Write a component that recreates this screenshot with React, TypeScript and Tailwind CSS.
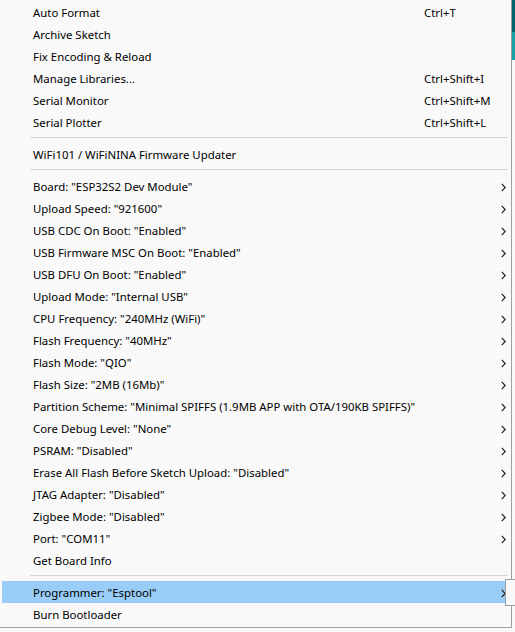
import type { ReactNode } from "react";

type Item =
  | { kind: "item"; label: string; shortcut?: string; sub?: boolean; active?: boolean }
  | { kind: "sep" };

const ITEMS: Item[] = [
  { kind: "item", label: "Auto Format", shortcut: "Ctrl+T" },
  { kind: "item", label: "Archive Sketch" },
  { kind: "item", label: "Fix Encoding & Reload" },
  { kind: "item", label: "Manage Libraries...", shortcut: "Ctrl+Shift+I" },
  { kind: "item", label: "Serial Monitor", shortcut: "Ctrl+Shift+M" },
  { kind: "item", label: "Serial Plotter", shortcut: "Ctrl+Shift+L" },
  { kind: "sep" },
  { kind: "item", label: "WiFi101 / WiFiNINA Firmware Updater" },
  { kind: "sep" },
  { kind: "item", label: 'Board: "ESP32S2 Dev Module"', sub: true },
  { kind: "item", label: 'Upload Speed: "921600"', sub: true },
  { kind: "item", label: 'USB CDC On Boot: "Enabled"', sub: true },
  { kind: "item", label: 'USB Firmware MSC On Boot: "Enabled"', sub: true },
  { kind: "item", label: 'USB DFU On Boot: "Enabled"', sub: true },
  { kind: "item", label: 'Upload Mode: "Internal USB"', sub: true },
  { kind: "item", label: 'CPU Frequency: "240MHz (WiFi)"', sub: true },
  { kind: "item", label: 'Flash Frequency: "40MHz"', sub: true },
  { kind: "item", label: 'Flash Mode: "QIO"', sub: true },
  { kind: "item", label: 'Flash Size: "2MB (16Mb)"', sub: true },
  { kind: "item", label: 'Partition Scheme: "Minimal SPIFFS (1.9MB APP with OTA/190KB SPIFFS)"', sub: true },
  { kind: "item", label: 'Core Debug Level: "None"', sub: true },
  { kind: "item", label: 'PSRAM: "Disabled"', sub: true },
  { kind: "item", label: 'Erase All Flash Before Sketch Upload: "Disabled"', sub: true },
  { kind: "item", label: 'JTAG Adapter: "Disabled"', sub: true },
  { kind: "item", label: 'Zigbee Mode: "Disabled"', sub: true },
  { kind: "item", label: 'Port: "COM11"', sub: true },
  { kind: "item", label: "Get Board Info" },
  { kind: "sep" },
  { kind: "item", label: 'Programmer: "Esptool"', sub: true, active: true },
  { kind: "item", label: "Burn Bootloader" },
];

function Chevron() {
  return (
    <svg width="5" height="9" viewBox="0 0 5 9" className="shrink-0">
      <path d="M0.8 0.8 L4.2 4.5 L0.8 8.2" fill="none" stroke="#222" strokeWidth="1.2" />
    </svg>
  );
}

function Row({ children, active }: { children: ReactNode; active?: boolean }) {
  return (
    <div
      className={`ml-[2px] mr-[2px] h-[22px] flex items-center pl-[31px] pr-[3px] pt-[2px] ${
        active ? "bg-[#99ccf7]" : ""
      }`}
    >
      {children}
    </div>
  );
}

export default function App() {
  return (
    <div
      className="w-[515px] h-[632px] bg-[#f9f9f9] relative overflow-hidden flex text-[11.4px] text-black"
      style={{ fontFamily: '"Noto Sans", "Liberation Sans", sans-serif' }}
    >
      {/* Menu */}
      <div className="w-[512px] h-[628px] border-r border-b border-[#a0a0a0] pt-[1px] flex flex-col">
        {ITEMS.map((item, i) =>
          item.kind === "sep" ? (
            <div key={i} className="h-[10px] pt-[4px] pl-[30px] pr-[3px]">
              <div className="h-px bg-[#d7d7d7]" />
            </div>
          ) : (
            <Row key={i} active={item.active}>
              <span className="flex-1 leading-none whitespace-nowrap">{item.label}</span>
              {item.shortcut && (
                <span className="w-[82px] leading-none whitespace-nowrap">{item.shortcut}</span>
              )}
              {item.sub && <Chevron />}
            </Row>
          )
        )}
      </div>

      {/* IDE window behind */}
      <div className="w-[3px] flex flex-col">
        <div className="h-[32px] bg-[#006468]" />
        <div className="h-[28px] bg-[#17a1a5]" />
        <div className="flex-1 bg-[#f9f9f9]" />
      </div>

      {/* Submenu edge */}
      <div className="absolute left-[505px] top-[579px] w-[12px] h-[27px] border border-[#a0a0a0] bg-[#f9f9f9]" />
    </div>
  );
}
